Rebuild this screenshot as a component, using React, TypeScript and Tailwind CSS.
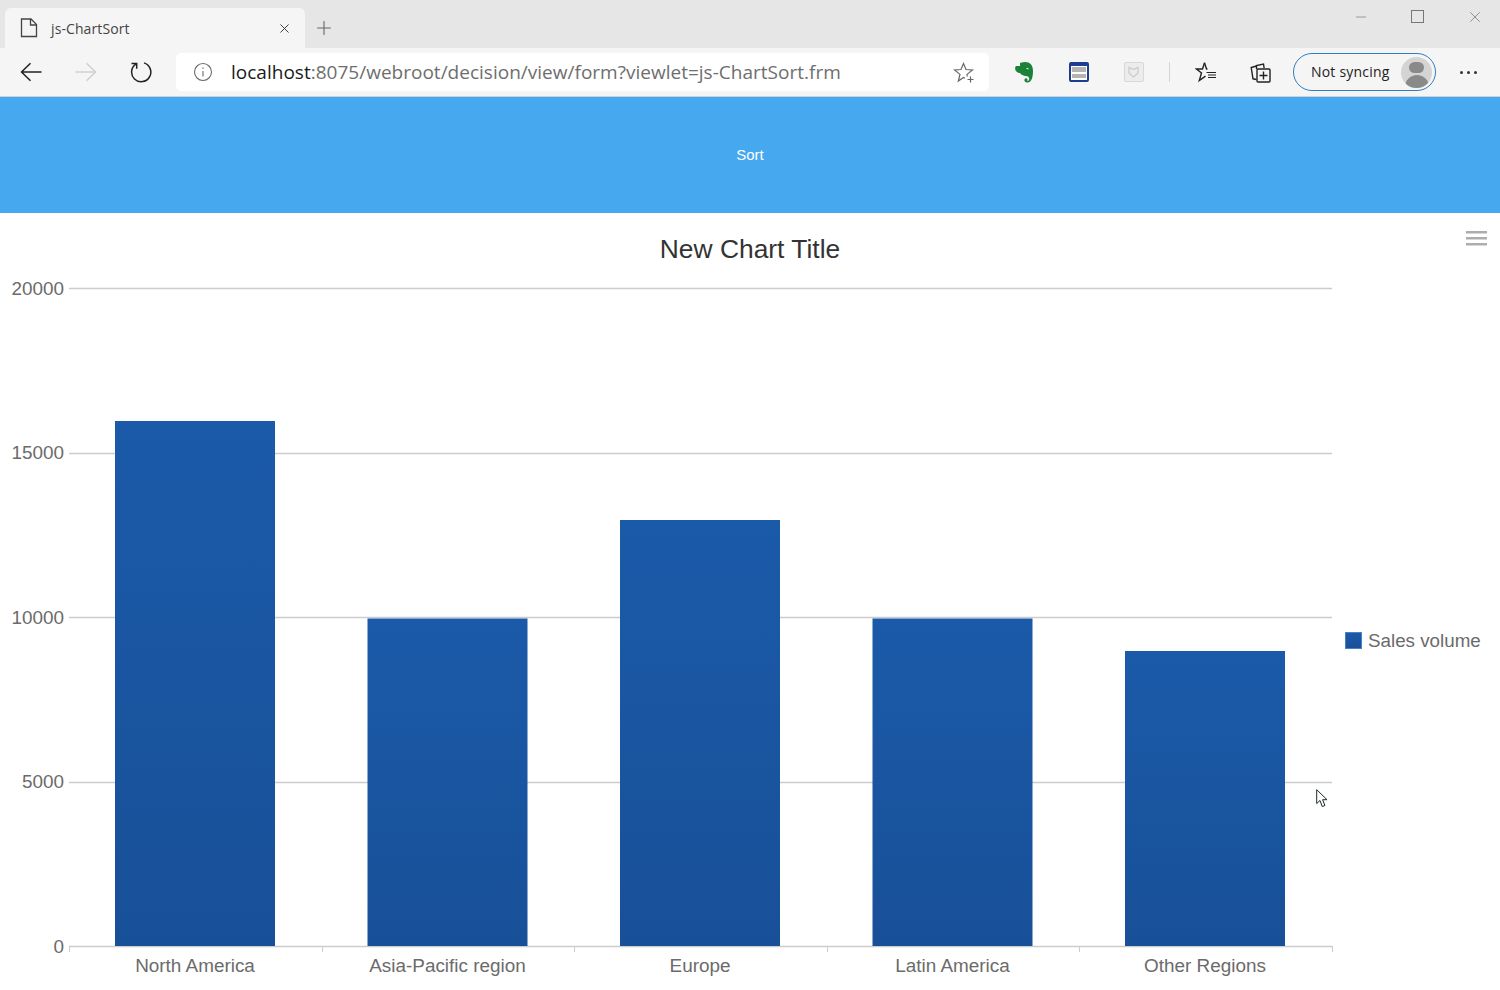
import { Minus, Plus, X } from "lucide-react"

const bars = [
  { name: "North America", x: 115, top: 421 },
  { name: "Asia-Pacific region", x: 367.5, top: 618.5 },
  { name: "Europe", x: 620, top: 520 },
  { name: "Latin America", x: 872.5, top: 618.5 },
  { name: "Other Regions", x: 1125, top: 651 },
]

const gridLines = [
  { label: "20000", y: 288.5, ty: 294.5 },
  { label: "15000", y: 453.5, ty: 458.5 },
  { label: "10000", y: 617.5, ty: 623.5 },
  { label: "5000", y: 782.5, ty: 787.5 },
  { label: "0", y: 946.5, ty: 952.5 },
]

const ticks = [69, 322, 574, 827, 1079, 1332]

function Toolbtn({ children }: { children: React.ReactNode }) {
  return <div className="w-[55px] h-[38px] flex items-center justify-center shrink-0">{children}</div>
}

function TabStrip() {
  return (
    <div className="h-[48px] bg-[#e6e6e6] flex items-start">
      <div className="ml-[5px] mt-[8px] w-[300px] h-[40px] bg-[#f5f5f5] rounded-t-[6px] flex items-center pl-[15px] pr-[13px]">
        <svg width="18" height="20" viewBox="0 0 18 20" fill="none" stroke="#444" strokeWidth="1.3">
          <path d="M1.5 1h9.5l5.5 5.5V18.5h-15z" />
          <path d="M10.5 1v6h6" />
        </svg>
        <span className="ml-[13px] text-[14px] text-[#444] font-['Open_Sans',sans-serif] tracking-[0.1px]">js-ChartSort</span>
        <X className="ml-auto" size={15} strokeWidth={1.5} color="#333" />
      </div>
      <div className="ml-[8px] mt-[8px] h-[40px] flex items-center">
        <Plus size={22} strokeWidth={1.2} color="#666" />
      </div>
      <div className="ml-auto -mr-[3px] flex items-center h-[33px]">
        <div className="w-[57px] flex justify-center">
          <Minus size={16} strokeWidth={1} color="#777" />
        </div>
        <div className="w-[57px] flex justify-center">
          <div className="w-[13px] h-[13px] border border-[#777]" />
        </div>
        <div className="w-[57px] flex justify-center">
          <X size={18} strokeWidth={1} color="#777" />
        </div>
      </div>
    </div>
  )
}

function BrowserIcons() {
  return (
    <>
      <Toolbtn>
        <svg width="18" height="21" viewBox="0 0 18 21" fill="#1b8238">
          <path d="M5 1C6 1 7 0 10 0c5 0 8 3 8 9 0 5-1 11-5 11.500-3 .4-4-1.500-3.500-3 .5-1.500 2.500-1.500 3-.1.200.6-.1 1.100-.6 1.100.8.600 2 .2 2.300-1 .5-2-1-3.300-3.200-3.500-2.500-.2-5-1-6-2.900-2 0-4.500-1.800-4.700-3.600C0 6 0 5 1 4h4z" />
          <path d="M11.500 6.500l2 .3" stroke="#fff" strokeWidth="1" fill="none" />
        </svg>
      </Toolbtn>
      <Toolbtn>
        <div className="w-[20px] h-[20px] rounded-[2px] border-[2px] border-t-[4px] border-[#1d3d8f] bg-white flex flex-col gap-[2px] p-px">
          <div className="h-[5px] bg-[#b4b4b4]" />
          <div className="h-[4px] bg-[#b4b4b4]" />
        </div>
      </Toolbtn>
      <Toolbtn>
        <div className="w-[20px] h-[20px] rounded-[2px] border border-[#d8d8d8] bg-[#ececec] flex items-center justify-center">
          <svg width="11" height="12" viewBox="0 0 11 12" fill="none" stroke="#cfcfcf" strokeWidth="1.5">
            <path d="M1 1.500l4.500 2 4.500-2V7L5.500 11 1 7z" />
          </svg>
        </div>
      </Toolbtn>
      <div className="w-[16px] flex justify-center">
        <div className="w-px h-[20px] bg-[#d4d4d4]" />
      </div>
      <div className="ml-px flex">
        <Toolbtn>
          <svg width="22" height="22" viewBox="0 0 22 22" fill="none" stroke="#222" strokeWidth="1.4">
            <path d="M9.500 1.800 7.500 8H1.500l5 4-2.200 7.500 6.200-4.300" />
            <path d="M9.500 1.800 11.500 8h1" />
            <path d="M11.500 11.500H21M13 14H21M13 16.500H21" strokeWidth="1.200" />
          </svg>
        </Toolbtn>
        <Toolbtn>
          <svg width="21" height="21" viewBox="0 0 21 21" fill="none" stroke="#222" strokeWidth="1.4">
            <path d="M6.500 7V3.500L13.500 2l.6 4" />
            <path d="M6.500 17.500 3 16.800 1.200 5.500 6.500 4" />
            <rect x="7" y="7" width="13" height="13" rx="1" />
            <path d="M13.500 9.500v8M9.500 13.500h8" />
          </svg>
        </Toolbtn>
      </div>
    </>
  )
}

function Toolbar() {
  return (
    <div className="h-[49px] bg-[#f5f5f5] border-b border-[#d0d0d0] flex items-start pt-[5px] pl-[3px] font-['Open_Sans',sans-serif]">
      <Toolbtn>
        <svg width="22" height="20" viewBox="0 0 22 20" fill="none" stroke="#222" strokeWidth="1.5">
          <path d="M21.500 10H1.500M10.500 1.200 1.500 10l9 8.800" />
        </svg>
      </Toolbtn>
      <Toolbtn>
        <svg width="22" height="20" viewBox="0 0 22 20" fill="none" stroke="#d0d0d0" strokeWidth="1.5">
          <path d="M.5 10h20M11.500 1.200l9 8.800-9 8.800" />
        </svg>
      </Toolbtn>
      <Toolbtn>
        <svg width="22" height="22" viewBox="0 0 22 22" fill="none" stroke="#222" strokeWidth="1.5">
          <path d="M6.200 2.900A9.600 9.600 0 1 0 14 1.900" />
          <path d="M6.700 7.800V2.500H1.500" />
        </svg>
      </Toolbtn>
      <div className="ml-[8px] w-[813px] h-[38px] bg-white rounded-[5px] flex items-center pl-[17px] pr-[14px]">
        <svg width="20" height="20" viewBox="0 0 20 20" fill="none" stroke="#6b6b6b" strokeWidth="1.1">
          <circle cx="10" cy="10" r="8.500" />
          <path d="M10 9v5.500M10 5.500v1.400" />
        </svg>
        <span className="ml-[18px] text-[19px] tracking-[0.01px] text-[#6e6e6e] whitespace-nowrap">
          <span className="text-[#1a1a1a]">localhost</span>:8075/webroot/decision/view/form?viewlet=js-ChartSort.frm
        </span>
        <svg className="ml-auto" width="22" height="22" viewBox="0 0 22 22" fill="none" stroke="#666" strokeWidth="1.2">
          <path d="M14.200 15.500 14 13.400 19.500 9 13 8.500 10.500 2.500 8 8.500 1.500 9 7 13.400 5.300 20 10.500 16.500 12 17.300" />
          <path d="M17.500 15.500v6M14.500 18.500h6" />
        </svg>
      </div>
      <div className="ml-[7px] flex items-center">
        <BrowserIcons />
        <div className="ml-[5px] w-[143px] h-[38px] rounded-[19px] border-[1.5px] border-[#2f7cc0] flex items-center pl-[17px] pr-[3px]">
          <span className="-mt-[2px] text-[14px] tracking-[0.2px] text-[#222] whitespace-nowrap">Not syncing</span>
          <div className="ml-auto w-[31px] h-[31px] rounded-full bg-[#d4d4d4] overflow-hidden flex flex-col items-center">
            <div className="mt-[5px] w-[15px] h-[15px] rounded-full bg-[#8a8a8a]" />
            <div className="mt-[2px] w-[24px] h-[16px] rounded-t-full bg-[#8a8a8a]" />
          </div>
        </div>
        <div className="ml-[5px]">
          <Toolbtn>
            <div className="flex gap-[4px]">
              <div className="w-[3px] h-[3px] rounded-full bg-[#333]" />
              <div className="w-[3px] h-[3px] rounded-full bg-[#333]" />
              <div className="w-[3px] h-[3px] rounded-full bg-[#333]" />
            </div>
          </Toolbtn>
        </div>
      </div>
    </div>
  )
}

// chart coordinates are page coordinates minus 213
function Chart() {
  const o = 213
  return (
    <svg width="1500" height="777" viewBox={`0 ${o} 1500 777`} className="block" fontFamily="'Liberation Sans', Arial, sans-serif">
      <defs>
        <linearGradient id="bar" x1="0" y1="0" x2="0" y2="1">
          <stop offset="0" stopColor="#1b5aa9" />
          <stop offset="1" stopColor="#185098" />
        </linearGradient>
      </defs>
      <text x="750" y="258" textAnchor="middle" fontSize="26.400" fill="#333">New Chart Title</text>
      <rect x="1466" y="231" width="21" height="2.500" fill="#adadad" />
      <rect x="1466" y="237" width="21" height="2.500" fill="#adadad" />
      <rect x="1466" y="243" width="21" height="2.500" fill="#adadad" />
      {gridLines.map((g) => (
        <g key={g.label}>
          <line x1="69" x2="1332" y1={g.y} y2={g.y} stroke="#ccc" strokeWidth="1.300" />
          <text x="64" y={g.ty} textAnchor="end" fontSize="18.900" fill="#6b6b6b">{g.label}</text>
        </g>
      ))}
      {ticks.map((t) => (
        <line key={t} x1={t + 0.5} x2={t + 0.5} y1="946" y2="952" stroke="#ccc" />
      ))}
      {bars.map((b) => (
        <g key={b.name}>
          <rect x={b.x} y={b.top} width="160" height={946 - b.top} fill="url(#bar)" />
          <text x={b.x + 80} y="972" textAnchor="middle" fontSize="18.900" fill="#6b6b6b">{b.name}</text>
        </g>
      ))}
      <rect x="1345.500" y="632.500" width="16" height="16" fill="url(#bar)" stroke="#4a80c4" />
      <text x="1368" y="647" fontSize="18.800" fill="#6b6b6b">Sales volume</text>
    </svg>
  )
}

export default function App() {
  return (
    <div className="relative w-[1500px] h-[990px] overflow-hidden bg-white">
      <TabStrip />
      <Toolbar />
      <div className="h-[116px] bg-[#46a8ee] flex items-center justify-center">
        <span className="text-[15px] text-white font-['Liberation_Sans',sans-serif]">Sort</span>
      </div>
      <Chart />
      {/* mouse pointer caught in the capture */}
      <svg className="absolute left-[1316px] top-[789px]" width="14" height="20" viewBox="0 0 14 20" fill="white" stroke="#1c2a20" strokeWidth="1">
        <path d="M.7.7V14.500l3.300-3 2.200 6 2.700-1-2.300-5.800h4.400z" />
      </svg>
    </div>
  )
}
